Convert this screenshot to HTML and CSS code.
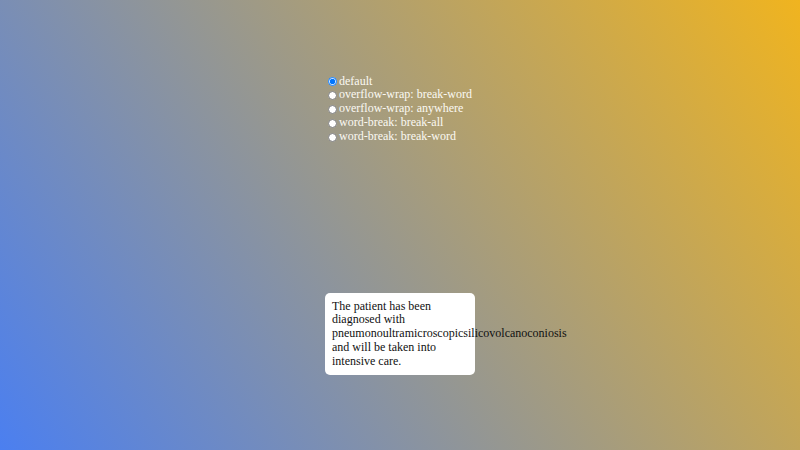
FILE: index.html
```html
<!DOCTYPE html>
<html>
<head>
<meta charset="utf-8">
<link rel="stylesheet" href="styles.css">
</head>
<body>
  <div class="options">
    <label class="option"><input type="radio" name="mode" checked>default</label>
    <label class="option"><input type="radio" name="mode">overflow-wrap: break-word</label>
    <label class="option"><input type="radio" name="mode">overflow-wrap: anywhere</label>
    <label class="option"><input type="radio" name="mode">word-break: break-all</label>
    <label class="option"><input type="radio" name="mode">word-break: break-word</label>
  </div>
  <div class="card">The patient has been diagnosed with pneumonoultramicroscopicsilicovolcanoconiosis and will be taken into intensive care.</div>
</body>
</html>
```
FILE: styles.css
```css
html, body {
  margin: 0;
  height: 100%;
}
body {
  font-family: "Liberation Serif", "Times New Roman", serif;
  font-size: 12px;
  background: linear-gradient(55deg, #4b7ff0, #f0b41f);
  display: flex;
  flex-direction: column;
  justify-content: space-around;
  align-items: center;
}
.options {
  display: flex;
  flex-direction: column;
}
.option {
  display: flex;
  align-items: center;
  color: #fbf9f3;
  line-height: 13.8px;
}
.option input {
  width: 9px;
  height: 9px;
  margin: 1px 2px 0 0;
}
.card {
  width: 136px;
  padding: 7px;
  background: #fff;
  border-radius: 5px;
  color: #111;
  line-height: 13.8px;
}
```
